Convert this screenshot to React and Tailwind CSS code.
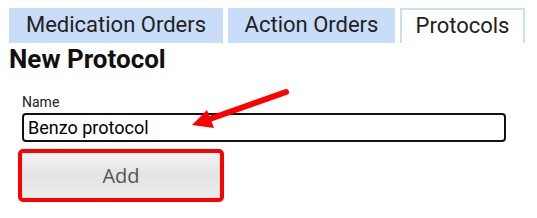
import React from 'react';

const tabs = [
  { label: 'Medication Orders', width: 'w-[214px]', active: false },
  { label: 'Action Orders', width: 'w-[167px]', active: false },
  { label: 'Protocols', width: 'w-[125px]', active: true },
];

function Tab({ label, width, active }) {
  if (active) {
    return (
      <div className={`${width} h-[35px] border-2 border-b-0 border-[#cadef8] bg-white text-center text-[22px] leading-[31px] text-[#222]`}>
        {label}
      </div>
    );
  }
  return (
    <div className={`${width} h-[35px] bg-[#c9ddf9] text-center text-[22px] leading-[33px] text-[#222]`}>
      {label}
    </div>
  );
}

export default function App() {
  return (
    <div className="relative w-[537px] h-[218px] bg-white pl-[9px] pt-[8px] font-['Roboto',sans-serif]">
      {/* Tabs */}
      <div className="flex gap-[5px]">
        {tabs.map(t => (
          <Tab key={t.label} {...t} />
        ))}
      </div>

      {/* Form */}
      <h2 className="mt-px text-[26px] leading-[30px] font-bold text-[#111]">New Protocol</h2>
      <div className="mt-[20px] ml-[13px] text-[14px] leading-[16px] text-[#222]">Name</div>
      <input
        type="text"
        defaultValue="Benzo protocol"
        className="mt-[3px] ml-[13px] block w-[484px] h-[29px] border-2 border-[#111] rounded-[4px] px-[4px] text-[18px] text-black outline-none font-['Roboto',sans-serif]"
      />
      <div className="mt-[7px] ml-[9px] w-[206px] h-[53px] border-4 border-[#ff0000] rounded-[5px]">
        <button className="w-full h-full rounded-[2px] bg-gradient-to-b from-[#f3f3f3] via-[#e4e4e4] to-[#ededed] text-[20px] text-[#555] font-['Open_Sans',sans-serif]">
          Add
        </button>
      </div>

      {/* Annotation arrow */}
      <svg className="absolute left-0 top-0 pointer-events-none" width="537" height="218" viewBox="0 0 537 218">
        <line x1="286" y1="92" x2="204" y2="121" stroke="#ff0000" strokeWidth="6" strokeLinecap="round" />
        <polygon points="192,125 207,110 214,128" fill="#ff0000" />
      </svg>
    </div>
  );
}
